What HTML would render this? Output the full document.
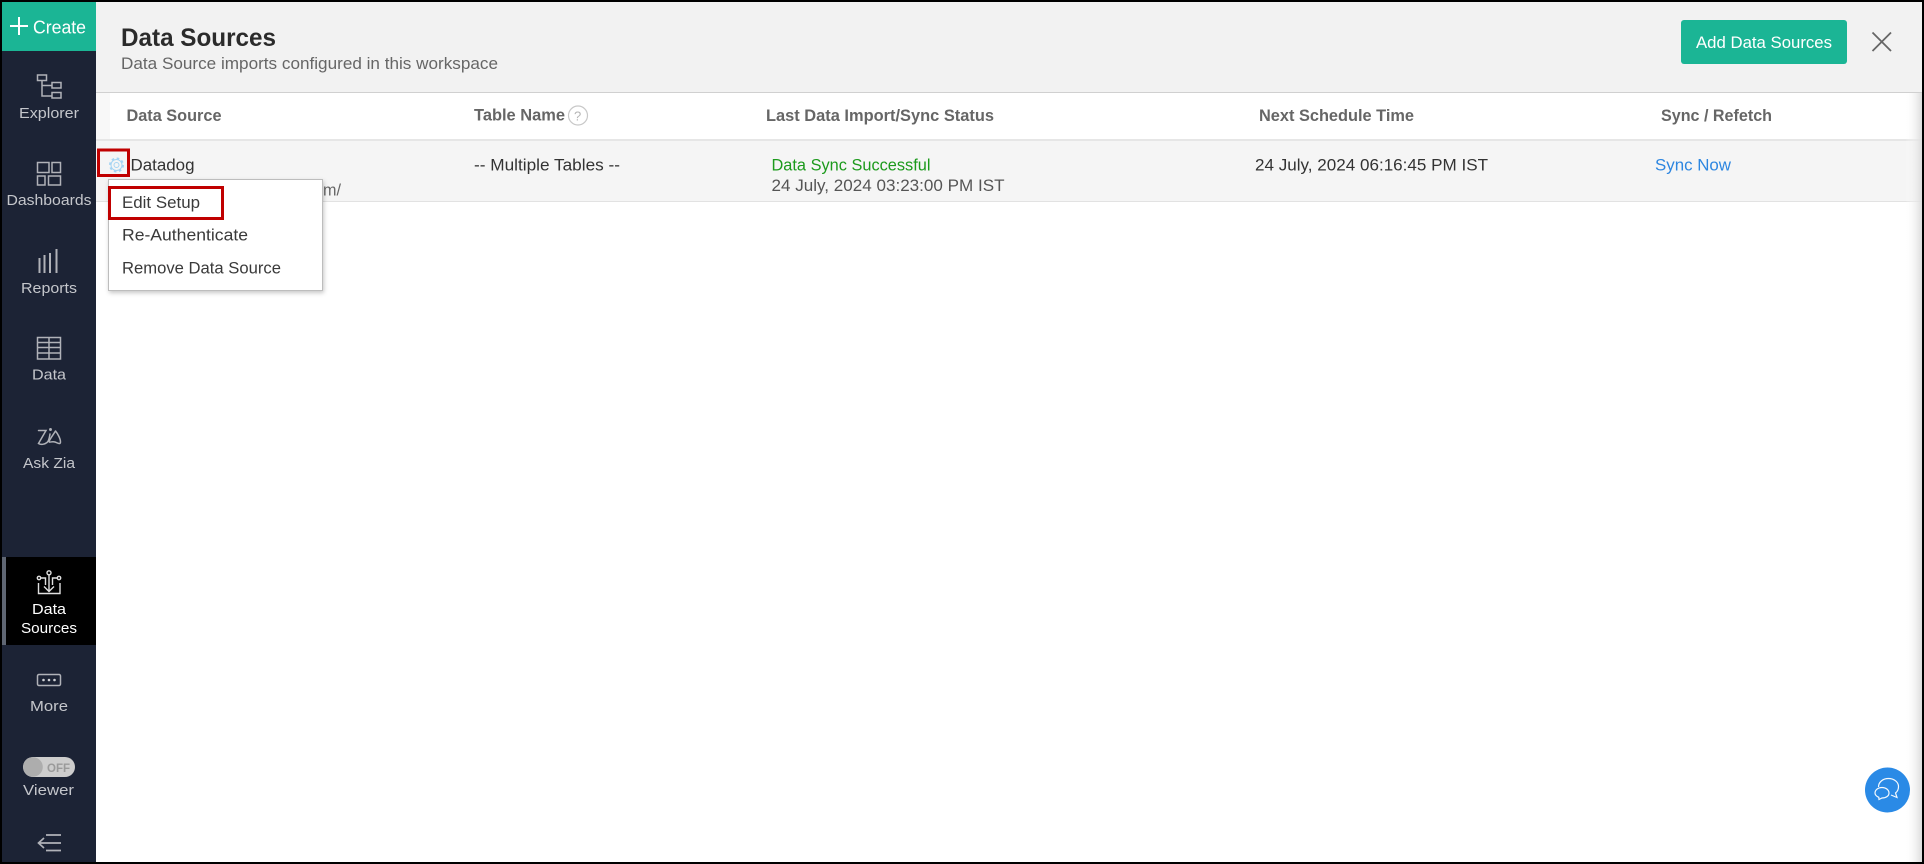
<!DOCTYPE html>
<html>
<head>
<meta charset="utf-8">
<title>Data Sources</title>
<style>
html,body{margin:0;padding:0;width:1924px;height:864px;overflow:hidden;background:#fff}
svg{display:block}
text{font-family:"Liberation Sans",sans-serif}
</style>
</head>
<body>
<svg xmlns="http://www.w3.org/2000/svg" width="1924" height="864" viewBox="0 0 1924 864">
<defs>
<linearGradient id="edge" x1="0" x2="1" y1="0" y2="0">
<stop offset="0" stop-color="#fff" stop-opacity="0"/>
<stop offset="1" stop-color="#dcdcdc"/>
</linearGradient>
<filter id="sh" x="-10%" y="-10%" width="120%" height="125%">
<feDropShadow dx="1" dy="2" stdDeviation="2" flood-color="#000" flood-opacity=".22"/>
</filter>
</defs>

<rect width="1924" height="864" fill="#000"/>
<rect x="96" y="2" width="1826" height="860" fill="#fff"/>

<!-- header -->
<rect x="96" y="2" width="1826" height="90" fill="#f2f2f2"/>
<rect x="96" y="92" width="1826" height="1" fill="#d0d0d0"/>
<rect x="96" y="93" width="14" height="46" fill="#f8f8f8"/>
<text x="121" y="46" font-size="25" font-weight="bold" fill="#2b2b2b" textLength="155" lengthAdjust="spacingAndGlyphs">Data Sources</text>
<text x="121" y="69" font-size="16.5" fill="#666" textLength="377" lengthAdjust="spacingAndGlyphs">Data Source imports configured in this workspace</text>
<rect x="1681" y="20" width="166" height="44" rx="3" fill="#1bb595"/>
<text x="1696" y="48" font-size="17" fill="#fff" textLength="136" lengthAdjust="spacingAndGlyphs">Add Data Sources</text>
<path d="M1872.5 32.5L1891 51M1891 32.5L1872.5 51" stroke="#666" stroke-width="1.8" fill="none"/>

<!-- table header -->
<rect x="96" y="139" width="1826" height="2" fill="#e6e6e6"/>
<g font-size="17" font-weight="bold" fill="#666">
<text x="126.500" y="121" textLength="95" lengthAdjust="spacingAndGlyphs">Data Source</text>
<text x="474" y="120.500" textLength="91" lengthAdjust="spacingAndGlyphs">Table Name</text>
<text x="766" y="121" textLength="228" lengthAdjust="spacingAndGlyphs">Last Data Import/Sync Status</text>
<text x="1259" y="121" textLength="155" lengthAdjust="spacingAndGlyphs">Next Schedule Time</text>
<text x="1661" y="121" textLength="111" lengthAdjust="spacingAndGlyphs">Sync / Refetch</text>
</g>
<circle cx="578" cy="115.500" r="9.500" fill="#fff" stroke="#c8c8c8" stroke-width="1.200"/>
<text x="574" y="120.500" font-size="13" fill="#b5b5b5">?</text>

<!-- row -->
<rect x="96" y="141" width="1826" height="60" fill="#f5f5f5"/>
<rect x="96" y="201" width="1826" height="1" fill="#e2e2e2"/>
<text x="130.500" y="170.500" font-size="17" fill="#333" textLength="64" lengthAdjust="spacingAndGlyphs">Datadog</text>
<text x="323" y="195.500" font-size="16.500" fill="#666" textLength="18" lengthAdjust="spacingAndGlyphs">m/</text>
<text x="474" y="170.500" font-size="17" fill="#333" textLength="146" lengthAdjust="spacingAndGlyphs">-- Multiple Tables --</text>
<text x="771.500" y="170.500" font-size="17" fill="#1c9a1c" textLength="159" lengthAdjust="spacingAndGlyphs">Data Sync Successful</text>
<text x="771.500" y="191" font-size="17" fill="#555" textLength="233" lengthAdjust="spacingAndGlyphs">24 July, 2024 03:23:00 PM IST</text>
<text x="1255" y="170.500" font-size="17" fill="#333" textLength="233" lengthAdjust="spacingAndGlyphs">24 July, 2024 06:16:45 PM IST</text>
<text x="1655" y="170.500" font-size="17" fill="#2d86e0" textLength="76" lengthAdjust="spacingAndGlyphs">Sync Now</text>

<!-- right edge shade -->
<rect x="1905" y="93" width="17" height="769" fill="url(#edge)"/>

<!-- gear + highlight -->
<g fill="none" stroke="#a5d4f3">
<circle cx="116.500" cy="165" r="5.500" stroke-width="1"/>
<circle cx="116.500" cy="165" r="6.600" stroke-width="1.800" stroke-dasharray="2.600 2.580"/>
<circle cx="116.500" cy="165" r="2.500" stroke-width="1"/>
</g>
<rect x="98.500" y="150" width="30" height="25.500" fill="none" stroke="#c00000" stroke-width="3"/>

<!-- dropdown -->
<rect x="108.500" y="179.500" width="214" height="111" fill="#fff" stroke="#bdbdbd" filter="url(#sh)"/>
<g font-size="17" fill="#3a3a3a">
<text x="122" y="208" textLength="78" lengthAdjust="spacingAndGlyphs">Edit Setup</text>
<text x="122" y="240.500" textLength="126" lengthAdjust="spacingAndGlyphs">Re-Authenticate</text>
<text x="122" y="273.500" textLength="159" lengthAdjust="spacingAndGlyphs">Remove Data Source</text>
</g>
<rect x="109.500" y="187.500" width="113" height="31" fill="none" stroke="#c00000" stroke-width="3"/>

<!-- chat button -->
<circle cx="1887.500" cy="790" r="22.500" fill="#2a8ae6"/>
<g fill="none" stroke="#fff" stroke-width="1.200" opacity=".95">
<path d="M1878.500 787C1878.500 782 1883 778.500 1888.500 778.500C1894 778.500 1898.500 782 1898.500 786.500C1898.500 789.500 1897.500 791.500 1895.500 793L1897 797.500L1891 795"/>
<path d="M1882 787.500C1886 787.500 1889 790 1889 793C1889 796 1886 798 1882 798L1879 799.500L1878.800 797.300C1876.500 796.300 1875 795 1875 793C1875 790 1878 787.500 1882 787.500Z"/>
</g>

<!-- sidebar -->
<rect x="2" y="2" width="94" height="860" fill="#1c2335"/>
<rect x="2" y="2" width="94" height="49" fill="#1bb595"/>
<path d="M19 17V35M10 26H28" stroke="#fff" stroke-width="2" fill="none"/>
<text x="33" y="33.500" font-size="18" fill="#fff" textLength="53" lengthAdjust="spacingAndGlyphs">Create</text>

<rect x="2" y="557" width="94" height="88" fill="#000"/>
<rect x="2" y="557" width="4" height="88" fill="#5f6673"/>

<g font-size="15" fill="#c4c6cb">
<text x="19" y="118" textLength="60" lengthAdjust="spacingAndGlyphs">Explorer</text>
<text x="6.500" y="205" textLength="85" lengthAdjust="spacingAndGlyphs">Dashboards</text>
<text x="21" y="293" textLength="56" lengthAdjust="spacingAndGlyphs">Reports</text>
<text x="32" y="379.500" textLength="34" lengthAdjust="spacingAndGlyphs">Data</text>
<text x="23" y="468" textLength="52" lengthAdjust="spacingAndGlyphs">Ask Zia</text>
<text x="30" y="711" textLength="38" lengthAdjust="spacingAndGlyphs">More</text>
<text x="23" y="795" textLength="51" lengthAdjust="spacingAndGlyphs">Viewer</text>
</g>
<g font-size="15" fill="#fff">
<text x="32" y="614" textLength="34" lengthAdjust="spacingAndGlyphs">Data</text>
<text x="21" y="633" textLength="56" lengthAdjust="spacingAndGlyphs">Sources</text>
</g>

<g fill="none" stroke="#b0b2b8" stroke-width="1.500">
<!-- explorer -->
<rect x="37.500" y="75" width="9" height="5.500"/>
<rect x="52" y="82.500" width="9" height="5.500"/>
<rect x="52" y="92.500" width="9" height="5.500"/>
<path d="M42 80.500V96H52M42 85.500H52"/>
<!-- dashboards -->
<rect x="37.500" y="162.500" width="11.500" height="10"/>
<rect x="52" y="162.500" width="8.500" height="10"/>
<rect x="37.500" y="176" width="7.500" height="9"/>
<rect x="48.500" y="176" width="12" height="9"/>
<!-- reports -->
<path d="M39.500 258V273M44.500 255V273M50 253V273M56.500 249V273" stroke-width="2"/>
<!-- data -->
<rect x="37.500" y="337.500" width="23" height="21.500"/>
<path d="M37.500 342.500H60.500M37.500 347.500H60.500M37.500 353H60.500M49 337.500V359"/>
<!-- zia -->
<path d="M38.500 430.500H46L38.500 443.500C41 445 44.500 444.500 47 442.500C49 441 49.500 437 50 434" stroke-linecap="round"/>
<circle cx="50.500" cy="429.500" r=".7" fill="#b0b2b8"/>
<path d="M55.500 431C53 435 50 439 49 441.500C49 443 52 441 55 442C57 442.800 60.500 445 60.500 442C60.500 439 58 434 55.500 431Z" stroke-linejoin="round"/>
<!-- more -->
<rect x="37.500" y="674.500" width="23" height="11" rx="1.500"/>
<!-- collapse -->
<path d="M46 835H61M39 843H61M46 850.500H61M44 838L38.500 843L44 848" stroke-width="1.700"/>
</g>
<g fill="#d0d2d6">
<circle cx="43.500" cy="680" r="1.300"/><circle cx="49" cy="680" r="1.300"/><circle cx="54.500" cy="680" r="1.300"/>
</g>

<!-- data sources icon -->
<g fill="none" stroke="#e0e0e0" stroke-width="1.400">
<circle cx="49" cy="572.800" r="2"/>
<path d="M49 575V591M44 586.500L49 591.500L54 586.500"/>
<circle cx="39" cy="578" r="1.700"/>
<circle cx="59" cy="578" r="1.700"/>
<path d="M40.700 578H45.500V585M57.300 578H52.500V585"/>
<path d="M38.500 583V593.500H60V583"/>
</g>

<!-- toggle -->
<rect x="23" y="757" width="52" height="20" rx="10" fill="#cdcdcd"/>
<circle cx="33" cy="767" r="9.800" fill="#adadad"/>
<text x="47" y="772" font-size="12" font-weight="bold" fill="#9a9a9a" textLength="23" lengthAdjust="spacingAndGlyphs">OFF</text>
</svg>
</body>
</html>
